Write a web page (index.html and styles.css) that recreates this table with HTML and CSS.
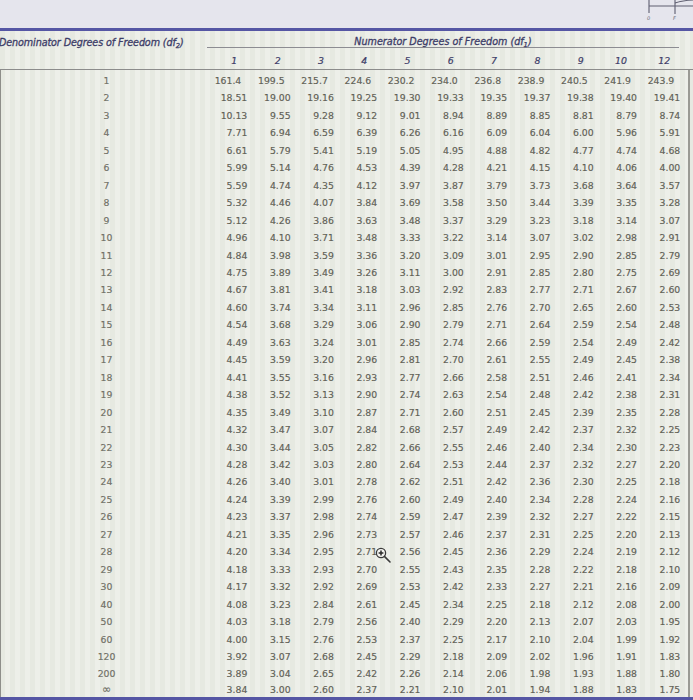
FILE: index.html
```html
<!DOCTYPE html>
<html>
<head>
<meta charset="utf-8">
<link rel="stylesheet" href="styles.css">
</head>
<body>
<div class="page">
  <div class="top">
    <svg class="dist-icon" width="52" height="22" viewBox="0 0 52 22">
      <path d="M4 0 V13 M4 6 H52 M30 0 V14" stroke="#5e5e70" stroke-width="1.1" fill="none"/>
      <path d="M30 3 C36 1 42 0 52 0" stroke="#5e5e70" stroke-width="1.1" fill="none"/>
      <text x="2" y="20" class="ico-t">0</text>
      <text x="28" y="20" class="ico-t">F</text>
    </svg>
  </div>
  <div class="rule"></div>
  <div class="sheet">
    <div class="titles">
      <div class="den-title">Denominator Degrees of Freedom (df<sub>2</sub>)</div>
      <div class="num-title">Numerator Degrees of Freedom (df<sub>1</sub>)</div>
    </div>
    <div class="row head"><span></span><span>1</span><span>2</span><span>3</span><span>4</span><span>5</span><span>6</span><span>7</span><span>8</span><span>9</span><span>10</span><span>12</span></div>
    <div class="body">
      <div class="row first"><span>1</span><span>161.4</span><span>199.5</span><span>215.7</span><span>224.6</span><span>230.2</span><span>234.0</span><span>236.8</span><span>238.9</span><span>240.5</span><span>241.9</span><span>243.9</span></div>
      <div class="row"><span>2</span><span>18.51</span><span>19.00</span><span>19.16</span><span>19.25</span><span>19.30</span><span>19.33</span><span>19.35</span><span>19.37</span><span>19.38</span><span>19.40</span><span>19.41</span></div>
      <div class="row"><span>3</span><span>10.13</span><span>9.55</span><span>9.28</span><span>9.12</span><span>9.01</span><span>8.94</span><span>8.89</span><span>8.85</span><span>8.81</span><span>8.79</span><span>8.74</span></div>
      <div class="row"><span>4</span><span>7.71</span><span>6.94</span><span>6.59</span><span>6.39</span><span>6.26</span><span>6.16</span><span>6.09</span><span>6.04</span><span>6.00</span><span>5.96</span><span>5.91</span></div>
      <div class="row"><span>5</span><span>6.61</span><span>5.79</span><span>5.41</span><span>5.19</span><span>5.05</span><span>4.95</span><span>4.88</span><span>4.82</span><span>4.77</span><span>4.74</span><span>4.68</span></div>
      <div class="row"><span>6</span><span>5.99</span><span>5.14</span><span>4.76</span><span>4.53</span><span>4.39</span><span>4.28</span><span>4.21</span><span>4.15</span><span>4.10</span><span>4.06</span><span>4.00</span></div>
      <div class="row"><span>7</span><span>5.59</span><span>4.74</span><span>4.35</span><span>4.12</span><span>3.97</span><span>3.87</span><span>3.79</span><span>3.73</span><span>3.68</span><span>3.64</span><span>3.57</span></div>
      <div class="row"><span>8</span><span>5.32</span><span>4.46</span><span>4.07</span><span>3.84</span><span>3.69</span><span>3.58</span><span>3.50</span><span>3.44</span><span>3.39</span><span>3.35</span><span>3.28</span></div>
      <div class="row"><span>9</span><span>5.12</span><span>4.26</span><span>3.86</span><span>3.63</span><span>3.48</span><span>3.37</span><span>3.29</span><span>3.23</span><span>3.18</span><span>3.14</span><span>3.07</span></div>
      <div class="row"><span>10</span><span>4.96</span><span>4.10</span><span>3.71</span><span>3.48</span><span>3.33</span><span>3.22</span><span>3.14</span><span>3.07</span><span>3.02</span><span>2.98</span><span>2.91</span></div>
      <div class="row"><span>11</span><span>4.84</span><span>3.98</span><span>3.59</span><span>3.36</span><span>3.20</span><span>3.09</span><span>3.01</span><span>2.95</span><span>2.90</span><span>2.85</span><span>2.79</span></div>
      <div class="row"><span>12</span><span>4.75</span><span>3.89</span><span>3.49</span><span>3.26</span><span>3.11</span><span>3.00</span><span>2.91</span><span>2.85</span><span>2.80</span><span>2.75</span><span>2.69</span></div>
      <div class="row"><span>13</span><span>4.67</span><span>3.81</span><span>3.41</span><span>3.18</span><span>3.03</span><span>2.92</span><span>2.83</span><span>2.77</span><span>2.71</span><span>2.67</span><span>2.60</span></div>
      <div class="row"><span>14</span><span>4.60</span><span>3.74</span><span>3.34</span><span>3.11</span><span>2.96</span><span>2.85</span><span>2.76</span><span>2.70</span><span>2.65</span><span>2.60</span><span>2.53</span></div>
      <div class="row"><span>15</span><span>4.54</span><span>3.68</span><span>3.29</span><span>3.06</span><span>2.90</span><span>2.79</span><span>2.71</span><span>2.64</span><span>2.59</span><span>2.54</span><span>2.48</span></div>
      <div class="row"><span>16</span><span>4.49</span><span>3.63</span><span>3.24</span><span>3.01</span><span>2.85</span><span>2.74</span><span>2.66</span><span>2.59</span><span>2.54</span><span>2.49</span><span>2.42</span></div>
      <div class="row"><span>17</span><span>4.45</span><span>3.59</span><span>3.20</span><span>2.96</span><span>2.81</span><span>2.70</span><span>2.61</span><span>2.55</span><span>2.49</span><span>2.45</span><span>2.38</span></div>
      <div class="row"><span>18</span><span>4.41</span><span>3.55</span><span>3.16</span><span>2.93</span><span>2.77</span><span>2.66</span><span>2.58</span><span>2.51</span><span>2.46</span><span>2.41</span><span>2.34</span></div>
      <div class="row"><span>19</span><span>4.38</span><span>3.52</span><span>3.13</span><span>2.90</span><span>2.74</span><span>2.63</span><span>2.54</span><span>2.48</span><span>2.42</span><span>2.38</span><span>2.31</span></div>
      <div class="row"><span>20</span><span>4.35</span><span>3.49</span><span>3.10</span><span>2.87</span><span>2.71</span><span>2.60</span><span>2.51</span><span>2.45</span><span>2.39</span><span>2.35</span><span>2.28</span></div>
      <div class="row"><span>21</span><span>4.32</span><span>3.47</span><span>3.07</span><span>2.84</span><span>2.68</span><span>2.57</span><span>2.49</span><span>2.42</span><span>2.37</span><span>2.32</span><span>2.25</span></div>
      <div class="row"><span>22</span><span>4.30</span><span>3.44</span><span>3.05</span><span>2.82</span><span>2.66</span><span>2.55</span><span>2.46</span><span>2.40</span><span>2.34</span><span>2.30</span><span>2.23</span></div>
      <div class="row"><span>23</span><span>4.28</span><span>3.42</span><span>3.03</span><span>2.80</span><span>2.64</span><span>2.53</span><span>2.44</span><span>2.37</span><span>2.32</span><span>2.27</span><span>2.20</span></div>
      <div class="row"><span>24</span><span>4.26</span><span>3.40</span><span>3.01</span><span>2.78</span><span>2.62</span><span>2.51</span><span>2.42</span><span>2.36</span><span>2.30</span><span>2.25</span><span>2.18</span></div>
      <div class="row"><span>25</span><span>4.24</span><span>3.39</span><span>2.99</span><span>2.76</span><span>2.60</span><span>2.49</span><span>2.40</span><span>2.34</span><span>2.28</span><span>2.24</span><span>2.16</span></div>
      <div class="row"><span>26</span><span>4.23</span><span>3.37</span><span>2.98</span><span>2.74</span><span>2.59</span><span>2.47</span><span>2.39</span><span>2.32</span><span>2.27</span><span>2.22</span><span>2.15</span></div>
      <div class="row"><span>27</span><span>4.21</span><span>3.35</span><span>2.96</span><span>2.73</span><span>2.57</span><span>2.46</span><span>2.37</span><span>2.31</span><span>2.25</span><span>2.20</span><span>2.13</span></div>
      <div class="row"><span>28</span><span>4.20</span><span>3.34</span><span>2.95</span><span>2.71</span><span>2.56</span><span>2.45</span><span>2.36</span><span>2.29</span><span>2.24</span><span>2.19</span><span>2.12</span></div>
      <div class="row"><span>29</span><span>4.18</span><span>3.33</span><span>2.93</span><span>2.70</span><span>2.55</span><span>2.43</span><span>2.35</span><span>2.28</span><span>2.22</span><span>2.18</span><span>2.10</span></div>
      <div class="row"><span>30</span><span>4.17</span><span>3.32</span><span>2.92</span><span>2.69</span><span>2.53</span><span>2.42</span><span>2.33</span><span>2.27</span><span>2.21</span><span>2.16</span><span>2.09</span></div>
      <div class="row"><span>40</span><span>4.08</span><span>3.23</span><span>2.84</span><span>2.61</span><span>2.45</span><span>2.34</span><span>2.25</span><span>2.18</span><span>2.12</span><span>2.08</span><span>2.00</span></div>
      <div class="row"><span>50</span><span>4.03</span><span>3.18</span><span>2.79</span><span>2.56</span><span>2.40</span><span>2.29</span><span>2.20</span><span>2.13</span><span>2.07</span><span>2.03</span><span>1.95</span></div>
      <div class="row"><span>60</span><span>4.00</span><span>3.15</span><span>2.76</span><span>2.53</span><span>2.37</span><span>2.25</span><span>2.17</span><span>2.10</span><span>2.04</span><span>1.99</span><span>1.92</span></div>
      <div class="row"><span>120</span><span>3.92</span><span>3.07</span><span>2.68</span><span>2.45</span><span>2.29</span><span>2.18</span><span>2.09</span><span>2.02</span><span>1.96</span><span>1.91</span><span>1.83</span></div>
      <div class="row"><span>200</span><span>3.89</span><span>3.04</span><span>2.65</span><span>2.42</span><span>2.26</span><span>2.14</span><span>2.06</span><span>1.98</span><span>1.93</span><span>1.88</span><span>1.80</span></div>
      <div class="row last"><span class="inf">∞</span><span>3.84</span><span>3.00</span><span>2.60</span><span>2.37</span><span>2.21</span><span>2.10</span><span>2.01</span><span>1.94</span><span>1.88</span><span>1.83</span><span>1.75</span></div>
    </div>
  </div>
  <div class="rule"></div>
  <svg class="zoom-cursor" width="24" height="24" viewBox="0 0 24 24">
    <circle cx="9" cy="9" r="4.6" fill="#f4f4f0" stroke="#3a3a3a" stroke-width="1.3"/>
    <path d="M9 6.6 V11.4 M6.6 9 H11.4" stroke="#2a2a2a" stroke-width="1.5"/>
    <path d="M12.4 12.4 L18 18" stroke="#3a3a3a" stroke-width="1.6" stroke-linecap="round"/>
  </svg>
</div>
</body>
</html>
```

FILE: styles.css
```css
html, body {
  margin: 0;
  padding: 0;
}
body {
  background: #e8eae4;
  font-family: "DejaVu Sans", Verdana, sans-serif;
  overflow: hidden;
}
.page {
  position: relative;
  width: 693px;
  height: 700px;
  overflow: hidden;
}
.top {
  height: 28px;
  background: #e5e5ed;
  display: flex;
  justify-content: flex-end;
  align-items: flex-start;
}
.dist-icon {
  display: block;
  margin-right: -4px;
}
.ico-t {
  font-family: "DejaVu Sans", sans-serif;
  font-size: 5px;
  font-style: italic;
  fill: #6a6a7a;
}
.rule {
  height: 3px;
  background: #5556a4;
}
.sheet {
  background: repeating-linear-gradient(90deg, #e6e9e1 0, #e6e9e1 5px, #edefe9 5px, #edefe9 10px);
}
.titles {
  display: flex;
  height: 20px;
  color: #3d3d68;
  font-style: italic;
  font-size: 9.6px;
}
.den-title {
  width: 208px;
  margin-left: -1px;
  padding-top: 6px;
  letter-spacing: -0.1px;
  -webkit-text-stroke: 0.3px #3d3d68;
}
.num-title {
  width: 472px;
  height: 17px;
  padding-top: 5px;
  box-sizing: border-box;
  text-align: center;
  border-bottom: 1px solid #8c8c92;
  -webkit-text-stroke: 0.3px #3d3d68;
}
sub {
  font-size: 0.7em;
  vertical-align: -0.25em;
  line-height: 0;
}
.row {
  display: grid;
  grid-template-columns: 203px repeat(11, 43.3px);
  align-items: center;
  height: 17.46px;
  font-size: 9.3px;
  color: #606055;
  -webkit-text-stroke: 0.15px #606055;
}
.row span {
  text-align: right;
  white-space: nowrap;
}
.row span:first-child {
  text-align: center;
  padding-left: 8px;
  color: #74746a;
}
.row .inf {
  font-size: 11px;
}
.head {
  height: 18px;
  border-bottom: 1px solid #8c8c8c;
  color: #3d3d68;
  -webkit-text-stroke: 0.2px #3d3d68;
  font-style: italic;
  font-size: 9.4px;
}
.head span {
  padding-right: 9px;
}
.body {
  padding-top: 1.8px;
  border-left: 2px solid #8e8e8a;
  border-right: 2px solid #9a9a94;
  width: 687px;
  margin-left: -1px;
}
.first span {
  padding-right: 6px;
}
.first span:first-child {
  padding-right: 0;
}
.last {
  height: 14px;
}
.zoom-cursor {
  position: absolute;
  left: 372px;
  top: 544px;
}
```
